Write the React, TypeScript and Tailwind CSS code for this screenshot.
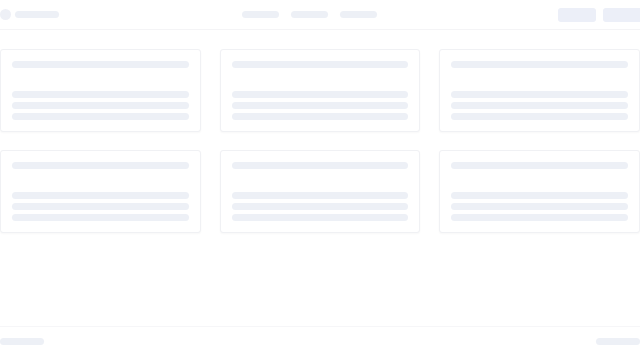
import React from "react";

const Bar = ({ className = "" }: { className?: string }) => (
  <div className={`rounded-full bg-[#edf0f6] ${className}`} />
);

const Card = () => (
  <div className="rounded-[3px] border border-[#f0f1f4] bg-white px-[11px] pt-[11px] pb-[11px] shadow-[0_1px_2px_rgba(0,0,0,0.03)]">
    <Bar className="h-[7px] w-full" />
    <div className="mt-[23px] flex flex-col gap-[4px]">
      <Bar className="h-[7px] w-full" />
      <Bar className="h-[7px] w-full" />
      <Bar className="h-[7px] w-full" />
    </div>
  </div>
);

export default function App() {
  return (
    <div className="relative h-[357px] w-[640px] overflow-hidden bg-white blur-[0.6px]" style={{ fontFamily: "Inter, sans-serif" }}>
      <header className="flex h-[30px] items-center border-b border-[#f4f4f6]">
        <div className="flex items-center gap-[4px]">
          <div className="h-[11px] w-[11px] rounded-full bg-[#eef0f6]" />
          <Bar className="h-[7px] w-[44px] rounded-[2px]" />
        </div>
        <nav className="ml-[183px] flex items-center gap-[12px]">
          <Bar className="h-[7px] w-[37px] rounded-[2px]" />
          <Bar className="h-[7px] w-[37px] rounded-[2px]" />
          <Bar className="h-[7px] w-[37px] rounded-[2px]" />
        </nav>
        <div className="ml-auto mr-[-6px] flex items-center gap-[7px]">
          <div className="h-[14px] w-[38px] rounded-[3px] bg-[#eceff8]" />
          <div className="h-[14px] w-[43px] rounded-[3px] bg-[#eceff8]" />
        </div>
      </header>
      <main className="h-[296px] pt-[19px]">
        <div className="grid grid-cols-3 gap-x-[19px] gap-y-[18px]">
          <Card />
          <Card />
          <Card />
          <Card />
          <Card />
          <Card />
        </div>
      </main>
      <footer className="flex items-center justify-between border-t border-[#f6f6f8] pt-[11px]">
        <Bar className="h-[7px] w-[44px] rounded-[2px]" />
        <Bar className="h-[7px] w-[44px] rounded-[2px]" />
      </footer>
    </div>
  );
}
